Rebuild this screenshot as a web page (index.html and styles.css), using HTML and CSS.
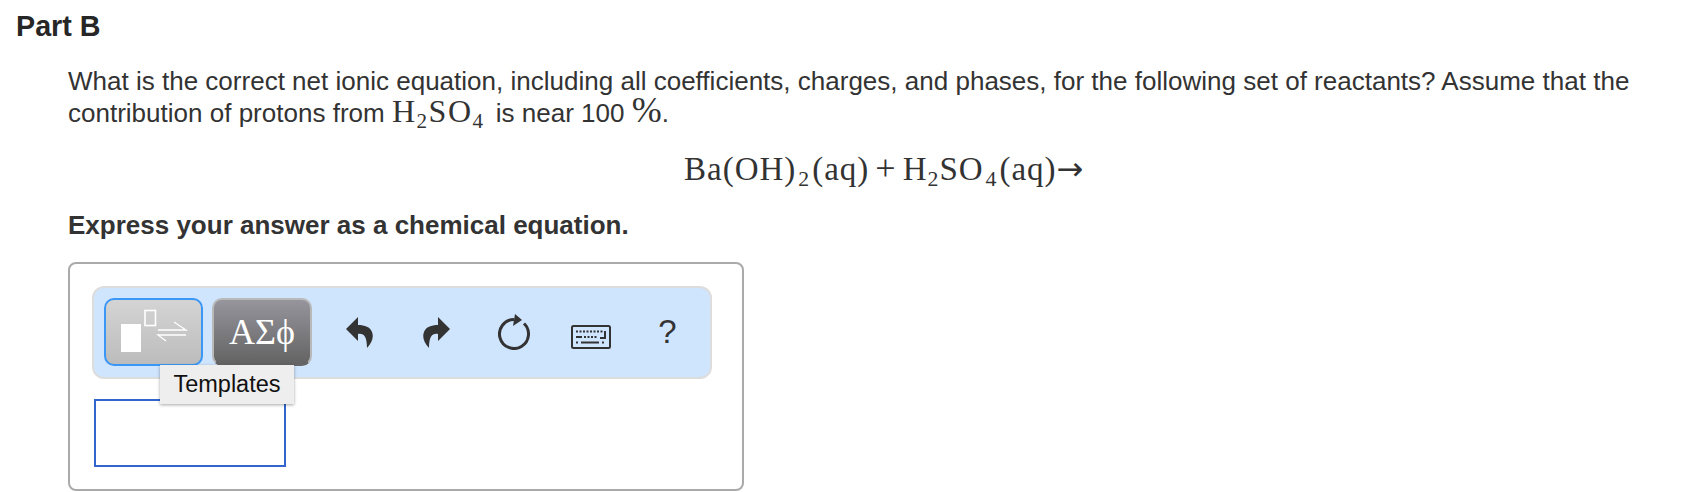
FILE: index.html
```html
<!DOCTYPE html>
<html lang="en">
<head>
<meta charset="utf-8">
<title>Part B</title>
<link rel="stylesheet" href="styles.css">
</head>
<body>
<h2 class="part">Part B</h2>
<div class="content">
  <p class="question">What is the correct net ionic equation, including all coefficients, charges, and phases, for the following set of reactants? Assume that the contribution of protons from <span class="math inline">H<sub>2</sub>SO<sub class="gap">4</sub></span> is near 100 <span class="math inline percent">%</span>.</p>
  <p class="equation math">Ba(OH)<sub class="wide">2</sub><span>(aq)</span><span class="op">+</span>H<sub>2</sub>SO<sub class="wide">4</sub><span>(aq)</span><span class="arrow">→</span></p>
  <p class="instruction">Express your answer as a chemical equation.</p>
  <div class="answer-panel">
    <div class="toolbar">
      <button class="tool templates" type="button" aria-label="Templates">
        <svg width="70" height="54" viewBox="0 0 70 54">
          <rect x="2" y="19" width="20" height="28" fill="#fff"/>
          <rect x="26" y="5.500" width="10.500" height="15" fill="none" stroke="#fff" stroke-width="1.600"/>
          <path d="M39 25H67L55 17M67 30H39L47 36" fill="none" stroke="#fff" stroke-width="1.300"/>
        </svg>
      </button>
      <button class="tool symbols" type="button">ΑΣϕ</button>
      <div class="icons">
        <span class="cell"><svg width="27" height="31" viewBox="0 0 27 31"><path d="M12 0 0 12l12 12v-7c6-1 9 3 9 14 5-5 7-11 5-16-2-5-7-7-14-7z" fill="#333"/></svg></span>
        <span class="cell"><svg width="27" height="31" viewBox="0 0 27 31"><path d="M15 0l12 12-12 12v-7C9 16 6 20 6 31 1 26-1 20 1 15c2-5 7-7 14-7z" fill="#333"/></svg></span>
        <span class="cell"><svg width="32" height="36" viewBox="0 0 32 36"><path d="M26 9.500A14.500 14.500 0 1 1 16 5.500" fill="none" stroke="#333" stroke-width="3"/><path d="M17 0l7 6-9 6z" fill="#333"/></svg></span>
        <span class="cell keyboard"><svg width="40" height="24" viewBox="0 0 40 24"><rect x="1" y="1" width="38" height="22" rx="1.500" fill="none" stroke="#333" stroke-width="2"/><path d="M5 6.500h27M13 12h13M5 17.500h2M31 17.500h2" stroke="#333" stroke-width="2" stroke-dasharray="2 1.500" fill="none"/><path d="M5 12h6M10 17.500h18M34 6v7h-5" stroke="#333" stroke-width="2" fill="none"/></svg></span>
        <span class="cell help">?</span>
      </div>
    </div>
    <div class="tooltip">Templates</div>
    <div class="answer-box"></div>
  </div>
</div>
</body>
</html>
```
FILE: styles.css
```css
* { box-sizing: border-box; }
html, body { margin: 0; padding: 0; background: #fff; }
body {
  height: 492px;
  overflow: hidden;
  font-family: "Liberation Sans", Arial, sans-serif;
  color: #333;
}
.part {
  margin: 0;
  padding: 12px 0 0 16px;
  font-size: 28.700px;
  line-height: 29px;
  font-weight: 700;
  color: #262626;
}
.content { padding: 24px 0 0 68px; }
.question {
  margin: 0;
  width: 1590px;
  font-size: 26.030px;
  line-height: 32px;
}
.math { font-family: "Liberation Serif", "Times New Roman", serif; }
.inline { font-size: 32px; line-height: 20px; letter-spacing: 1.500px; }
.percent { font-size: 36px; letter-spacing: 0; }
sub { font-size: 66%; line-height: 0; vertical-align: -0.28em; }
.gap { margin-right: 4px; }
.equation {
  margin: 19px 0 0;
  padding-left: 616px;
  font-size: 33px;
  line-height: 42px;
  letter-spacing: 1px;
  white-space: nowrap;
  color: #333;
}
.wide { margin: 0 2px; }
.op { margin: 0 6px; font-size: 36px; line-height: 20px; }
.arrow { font-family: "DejaVu Sans", sans-serif; font-size: 32px; line-height: 20px; }
.instruction {
  margin: 21px 0 0;
  font-size: 26px;
  line-height: 29px;
  font-weight: 700;
}
.answer-panel {
  position: relative;
  margin-top: 22px;
  width: 676px;
  height: 229px;
  padding: 22px 0 0 22px;
  border: 2px solid #aaa;
  border-radius: 8px;
}
.toolbar {
  display: flex;
  align-items: flex-start;
  gap: 9px;
  width: 620px;
  height: 93px;
  padding: 10px 10px 10px 10px;
  background: #cfe4fd;
  border: 2px solid #ddd;
  border-radius: 12px;
}
.tool {
  flex: none;
  width: 99px;
  height: 68px;
  padding: 0;
  border-radius: 10px;
}
.templates {
  display: flex;
  align-items: center;
  justify-content: center;
  background: linear-gradient(#d4d4d4, #bcbcbc);
  border: 2px solid #3a97f5;
}
.symbols {
  width: 100px;
  background: linear-gradient(#96959d, #636363);
  border: 2px solid #b9b9b9;
  border-bottom-color: #666;
  color: #fff;
  font-family: "Liberation Serif", "DejaVu Serif", serif;
  font-size: 36px;
}
.icons {
  display: grid;
  grid-template-columns: repeat(5, 77px);
  align-items: center;
  justify-items: center;
  height: 68px;
}
.cell { display: flex; }
.keyboard { margin-top: 10px; }
.help { font-size: 33px; line-height: 36px; }
.tooltip {
  position: absolute;
  left: 90px;
  top: 101px;
  width: 134px;
  height: 39px;
  padding-top: 4px;
  background: #eee;
  box-shadow: 0 1px 3px rgba(0, 0, 0, 0.35);
  color: #111;
  font-size: 23.500px;
  line-height: 30px;
  text-align: center;
  z-index: 2;
}
.answer-box {
  width: 192px;
  height: 68px;
  margin: 20px 0 0 2px;
  border: 2px solid #3366cc;
}
```
